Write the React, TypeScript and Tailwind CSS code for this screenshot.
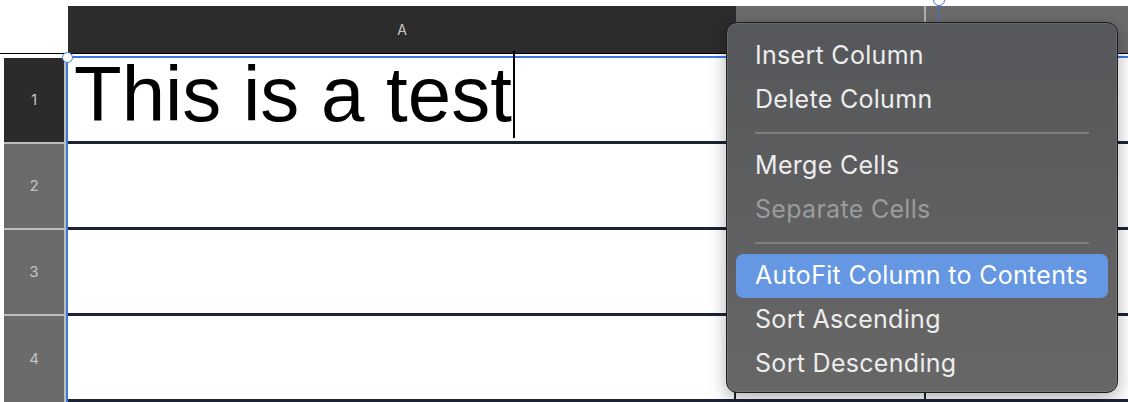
import React from 'react';

const font = { fontFamily: '"Liberation Sans", Arial, sans-serif' };

type Item = { label: string; disabled?: boolean; active?: boolean } | 'sep';

const menuItems: Item[] = [
  { label: 'Insert Column' },
  { label: 'Delete Column' },
  'sep',
  { label: 'Merge Cells' },
  { label: 'Separate Cells', disabled: true },
  'sep',
  { label: 'AutoFit Column to Contents', active: true },
  { label: 'Sort Ascending' },
  { label: 'Sort Descending' },
];

function RowHeader({ n, dark, last }: { n: number; dark?: boolean; last?: boolean }) {
  return (
    <div
      className={`w-[62px] shrink-0 flex items-center justify-center border-r-2 border-[#bdbdbd] text-[15px] text-[#c4c4c4] ${
        last ? '' : 'border-b-2'
      } ${dark ? 'bg-[#2b2b2b]' : 'bg-[#6b6b6b]'}`}
      style={{ fontFamily: 'Inter, sans-serif' }}
    >
      {n}
    </div>
  );
}

function Row({ n, dark, last, children }: { n: number; dark?: boolean; last?: boolean; children?: React.ReactNode }) {
  return (
    <div className="flex h-[86px]">
      <div className="w-[4px] shrink-0" />
      <RowHeader n={n} dark={dark} last={last} />
      <div className="w-[2px] shrink-0 bg-[#3b78e0]" />
      <div className="relative w-[668px] shrink-0 border-b-[3px] border-r-2 border-[#1c2433] bg-white">{children}</div>
      <div className="w-[190px] shrink-0 border-b-[3px] border-r-2 border-[#1c2433] bg-white" />
      <div className="flex-1 border-b-[3px] border-[#1c2433] bg-white" />
    </div>
  );
}

function ContextMenu() {
  return (
    <div
      className="absolute left-[726px] top-[22px] w-[392px] h-[371px] rounded-[11px] border border-[#1e1e1e] bg-linear-to-b from-[#56575a] to-[#676767] pt-[11px] pb-[8px] shadow-[0_6px_18px_rgba(0,0,0,0.3),inset_0_0_0_1px_rgba(255,255,255,0.1)]"
      style={{ fontFamily: 'Inter, "Open Sans", sans-serif' }}
    >
      {menuItems.map((item, i) =>
        item === 'sep' ? (
          <div key={i} className="h-[22px] flex items-center px-[28px]">
            <div className="h-[2px] w-full bg-[#7e7e7e]" />
          </div>
        ) : (
          <div
            key={i}
            className={`mx-[9px] h-[44px] flex items-center rounded-[7px] pl-[19px] text-[25px] tracking-[0.3px] ${
              item.active ? 'bg-[#6697e2] text-white' : item.disabled ? 'text-[#9a9b9c]' : 'text-[#ededed]'
            }`}
          >
            {item.label}
          </div>
        )
      )}
    </div>
  );
}

export default function App() {
  return (
    <div className="relative w-[1128px] h-[402px] overflow-hidden bg-white" style={font}>
      <div className="h-[6px]" />
      {/* column headers */}
      <div className="flex h-[48px] border-b border-black">
        <div className="w-[68px] shrink-0 bg-white" />
        <div
          className="relative w-[668px] shrink-0 flex items-center justify-center bg-[#2c2c2c] text-[14px] text-[#c8c8c8]"
          style={{ fontFamily: 'Inter, sans-serif' }}
        >
          A
          <div className="absolute left-[716px] top-[21px] w-0 h-0 border-l-[5px] border-r-[5px] border-t-[6px] border-l-transparent border-r-transparent border-t-[#8c8c8c]" />
        </div>
        <div className="w-[188px] shrink-0 bg-[#6b6b6b]" />
        <div className="w-[2px] shrink-0 bg-[#b0b0b0]" />
        <div className="flex-1 bg-[#6b6b6b]" />
      </div>
      <div className="h-[2px]" />
      <div className="flex h-[2px]">
        <div className="w-[66px] shrink-0" />
        <div className="flex-1 bg-[#3b78e0]" />
      </div>

      <Row n={1} dark>
        <div className="-mt-[3px] pl-[6px] text-[78px] leading-none text-black whitespace-nowrap">
          <span className="relative">
            This is a test
            <span className="absolute right-[-3px] top-[1px] h-[87px] w-[2px] bg-black" />
          </span>
        </div>
      </Row>
      <Row n={2} />
      <Row n={3} />
      <Row n={4} last />

      {/* selection handles */}
      <div className="absolute left-[62px] top-[52px] w-[11px] h-[11px] rounded-full border-[1.5px] border-[#3b78e0] bg-white" />
      <div className="absolute left-[938px] top-0 w-[2px] h-[22px] bg-[#566f9c]" />
      <div className="absolute left-[933px] top-[-6px] w-[12px] h-[12px] rounded-full border-[1.5px] border-[#4a7ad8] bg-white" />

      <ContextMenu />
    </div>
  );
}
